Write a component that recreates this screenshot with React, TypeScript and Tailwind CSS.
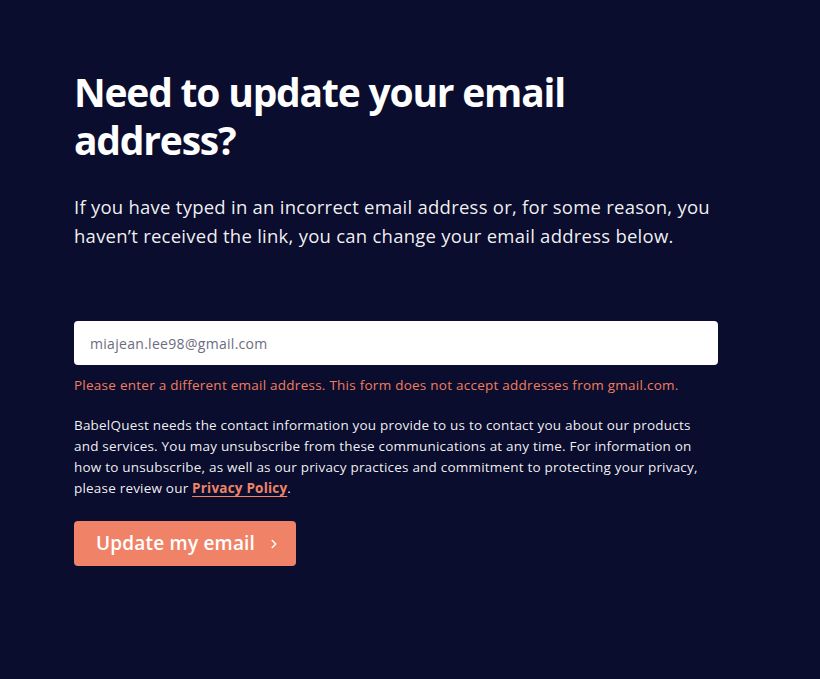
import { ChevronRight } from "lucide-react";

const font = { fontFamily: '"Open Sans", "Noto Sans", sans-serif' };

const App = () => {
  return (
    <div className="min-h-[679px] w-full bg-[#0b0d2e] text-white" style={font}>
      <div className="w-[644px] ml-[74px] pt-[68px]">
        <h1 className="text-[39px] leading-[48px] font-bold tracking-[-1.2px]">
          Need to update your email address?
        </h1>
        <p className="mt-[28px] text-[18.5px] leading-[29px] tracking-[0.25px] text-white/95">
          If you have typed in an incorrect email address or, for some reason, you haven’t received the
          link, you can change your email address below.
        </p>

        <form className="mt-[71px]" onSubmit={(e) => e.preventDefault()}>
          <input
            type="email"
            defaultValue="miajean.lee98@gmail.com"
            className="block w-full h-[44px] rounded-[4px] bg-white px-[16px] text-[14px] tracking-[0.3px] text-[#6c6c7e] outline-none"
          />
          <p className="mt-[11px] text-[13.5px] leading-[18px] tracking-[0.25px] text-[#ef7d5f]">
            Please enter a different email address. This form does not accept addresses from gmail.com.
          </p>
          <p className="mt-[21px] text-[13.5px] leading-[21px] tracking-[0.2px] text-white/95">
            BabelQuest needs the contact information you provide to us to contact you about our products and
            services. You may unsubscribe from these communications at any time. For information on how to
            unsubscribe, as well as our privacy practices and commitment to protecting your privacy, please
            review our{" "}
            <a href="#" className="font-bold text-[#ef8466] underline underline-offset-[3px] decoration-1">
              Privacy Policy
            </a>
            .
          </p>
          <button
            type="submit"
            className="mt-[22px] flex items-center h-[45px] w-[222px] rounded-[4px] bg-[#f08367] pl-[22px] text-[19px] tracking-[0.2px] font-semibold"
          >
            Update my email
            <ChevronRight className="ml-[12px] w-[14px] h-[14px]" strokeWidth={2.5} />
          </button>
        </form>
      </div>
    </div>
  );
};

export default App;
